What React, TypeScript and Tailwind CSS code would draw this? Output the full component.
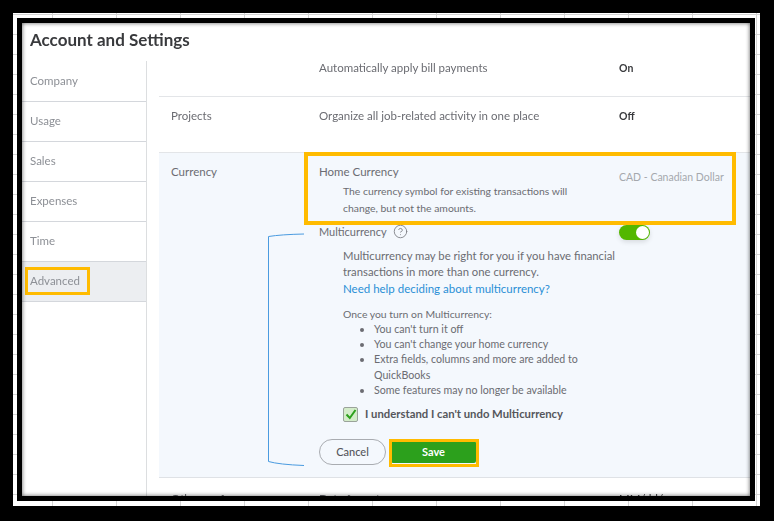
import { CircleHelp } from 'lucide-react';

const navItems = ['Company', 'Usage', 'Sales', 'Expenses', 'Time', 'Advanced'];

export default function App() {
  return (
    <div className="w-[774px] h-[521px] bg-black pt-[13px] pl-[13px] overflow-hidden font-['Lato',sans-serif] text-[11.5px] text-[#6b6c72]">
      {/* spreadsheet peeking out behind the screenshot */}
      <div className="w-[747px] h-[493px] p-[5px] pl-[4px] bg-white bg-[linear-gradient(#d4d4d4_1px,transparent_1px),linear-gradient(90deg,#d4d4d4_1px,transparent_1px)] bg-[size:64px_20px] bg-[position:39px_1px]">
        <div className="border-[5px] border-black h-[483px] w-[738px]">
          <div className="relative h-[473px] w-[728px] bg-white overflow-hidden">
            <div className="blur-[0.3px]">
              <h1 className="h-[38px] pl-[8px] pt-[6px] text-[17px] leading-[22px] font-bold text-[#393a3d]">Account and Settings</h1>

              <div className="flex h-[435px]">
                {/* Sidebar */}
                <nav className="w-[125px] shrink-0 pt-[1px] border-r border-[#dcdee0]">
                  {navItems.map((item) => (
                    <div
                      key={item}
                      className={`relative h-[40px] flex items-center pl-[8px] pb-[2px] border-b border-[#d4d7dc] text-[#8d9096] ${
                        item === 'Advanced' ? 'bg-[#eceef1]' : ''
                      }`}
                    >
                      {item}
                      {item === 'Advanced' && (
                        <span className="absolute left-[3px] top-[5px] w-[65px] h-[28px] border-[3px] border-[#ffbb00]"></span>
                      )}
                    </div>
                  ))}
                </nav>

                {/* Settings */}
                <main className="flex-1 ml-[12px]">
                  <div className="h-[36px] flex pt-[1px] border-b border-[#e3e5e8]">
                    <div className="w-[160px] shrink-0"></div>
                    <div className="w-[300px] shrink-0 leading-[12px]">Automatically apply bill payments</div>
                    <div className="font-bold text-[#393a3d] text-[10.5px] leading-[12px]">On</div>
                  </div>

                  <div className="h-[56px] flex pt-[12px] border-b border-[#e3e5e8] leading-[14px]">
                    <div className="w-[160px] shrink-0 pl-[12px]">Projects</div>
                    <div className="w-[300px] shrink-0">Organize all job-related activity in one place</div>
                    <div className="font-bold text-[#393a3d] text-[10.5px]">Off</div>
                  </div>

                  <section className="relative h-[325px] flex bg-[#f4f8fd] border-b border-[#dfe2e6]">
                    <div className="w-[160px] shrink-0 pl-[12px] pt-[12px] leading-[14px]">Currency</div>

                    <div className="w-[300px] shrink-0 pt-[12px]">
                      <div className="leading-[14px]">Home Currency</div>
                      <p className="ml-[24px] mt-[4px] text-[10.4px] leading-[17px] w-[250px]">
                        The currency symbol for existing transactions will change, but not the amounts.
                      </p>

                      <div className="mt-[7px] flex items-center gap-[6px] leading-[14px] text-[11px]">
                        Multicurrency
                        <CircleHelp className="w-[15px] h-[15px] text-[#7c7e84]" strokeWidth={1.4} />
                      </div>

                      <div className="ml-[24px] mt-[9px]">
                        <p className="text-[11.3px] leading-[16px] w-[290px]">
                          Multicurrency may be right for you if you have financial transactions in more than one currency.
                        </p>
                        <a className="block text-[11.5px] leading-[17px] text-[#2a8fd6]">Need help deciding about multicurrency?</a>

                        <p className="mt-[10px] text-[10.4px] leading-[14px]">Once you turn on Multicurrency:</p>
                        <ul className="list-disc ml-[31px] text-[10.65px] leading-[15.2px] w-[225px]">
                          <li>You can't turn it off</li>
                          <li>You can't change your home currency</li>
                          <li>Extra fields, columns and more are added to QuickBooks</li>
                          <li>Some features may no longer be available</li>
                        </ul>

                        <label className="mt-[9px] flex items-center gap-[7px] font-bold text-[11.3px] text-[#55565b]">
                          <span className="w-[15px] h-[15px] flex items-center justify-center bg-[#d3ecc9] border border-[#9aa39a] rounded-[2px]">
                            <svg viewBox="0 0 12 12" className="w-[12px] h-[12px]">
                              <path d="M1.5 6.5 L4.8 10 L10.5 2" fill="none" stroke="#2ca01c" strokeWidth="2" />
                            </svg>
                          </span>
                          I understand I can't undo Multicurrency
                        </label>
                      </div>

                      <div className="mt-[16px] flex items-center gap-[5px]">
                        <button className="w-[67px] h-[26px] rounded-full border border-[#a9acb1] bg-[#f4f8fd] text-[11px] font-medium text-[#55565b]">Cancel</button>
                        <button className="w-[85px] h-[22px] rounded-[2px] bg-[#2ca01c] text-[11px] font-bold text-white">Save</button>
                      </div>
                    </div>

                    <div className="flex-1 pt-[16px]">
                      <div className="text-[#a5a8ad] text-[10.5px] leading-[16px] whitespace-nowrap">CAD - Canadian Dollar</div>
                      <span className="mt-[40px] relative block w-[31px] h-[15px] rounded-full bg-[#53b700] shadow-[0_2px_5px_rgba(0,0,0,0.12)]">
                        <span className="absolute right-[1px] top-[1px] w-[13px] h-[13px] rounded-full bg-white"></span>
                      </span>
                    </div>

                    {/* callouts drawn on top of the screenshot */}
                    <span className="absolute left-[145px] top-[-1px] w-[432px] h-[73px] border-[4px] border-[#ffbb00]"></span>
                    <span className="absolute left-[230px] top-[286px] w-[90px] h-[28px] border-[3px] border-[#ffbb00]"></span>
                    <svg className="absolute left-[108px] top-[80px] w-[38px] h-[234px]" viewBox="0 0 38 234" fill="none">
                      <path d="M37 1 Q14 1.5 1.5 3.5 V228.5 Q12 231.5 37 232.5" stroke="#4a9be0" strokeWidth="1" />
                    </svg>
                  </section>

                  <div className="flex pt-[14px] leading-[14px]">
                    <div className="w-[160px] shrink-0 pl-[12px]">Other preferences</div>
                    <div className="w-[300px] shrink-0">Date format</div>
                    <div className="text-[#393a3d]">MM/dd/yy</div>
                  </div>
                </main>
              </div>
            </div>

            {/* soft dark edge of the pasted screenshot */}
            <div className="absolute inset-0 pointer-events-none shadow-[inset_0_0_4px_rgba(0,0,0,0.65)]"></div>
          </div>
        </div>
      </div>
    </div>
  );
}
